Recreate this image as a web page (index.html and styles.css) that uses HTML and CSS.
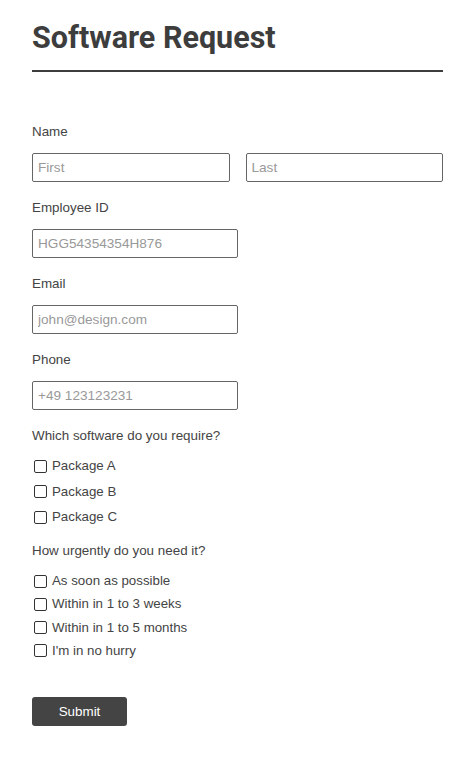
FILE: index.html
```html
<!DOCTYPE html>
<html lang="en">
<head>
<meta charset="utf-8">
<title>Software Request</title>
<link rel="stylesheet" href="styles.css">
</head>
<body>
<form class="page">
  <h1 class="title">Software Request</h1>
  <div class="rule"></div>

  <div class="field first-field">
    <label class="label">Name</label>
    <div class="name-row">
      <input class="input" type="text" placeholder="First">
      <input class="input" type="text" placeholder="Last">
    </div>
  </div>

  <div class="field">
    <label class="label">Employee ID</label>
    <input class="input short" type="text" placeholder="HGG54354354H876">
  </div>

  <div class="field">
    <label class="label">Email</label>
    <input class="input short" type="text" placeholder="john@design.com">
  </div>

  <div class="field">
    <label class="label">Phone</label>
    <input class="input short" type="text" placeholder="+49 123123231">
  </div>

  <div class="field">
    <div class="label">Which software do you require?</div>
    <div class="options options-wide">
      <label class="option"><input class="check" type="checkbox">Package A</label>
      <label class="option"><input class="check" type="checkbox">Package B</label>
      <label class="option"><input class="check" type="checkbox">Package C</label>
    </div>
  </div>

  <div class="field">
    <div class="label">How urgently do you need it?</div>
    <div class="options options-tight">
      <label class="option"><input class="check" type="checkbox">As soon as possible</label>
      <label class="option"><input class="check" type="checkbox">Within in 1 to 3 weeks</label>
      <label class="option"><input class="check" type="checkbox">Within in 1 to 5 months</label>
      <label class="option"><input class="check" type="checkbox">I'm in no hurry</label>
    </div>
  </div>

  <button class="submit" type="button">Submit</button>
</form>
</body>
</html>
```

FILE: styles.css
```css
html, body {
  margin: 0;
  padding: 0;
  background: #ffffff;
}

.page {
  display: flex;
  flex-direction: column;
  padding: 20px 31px 0 32px;
  font-family: "Liberation Sans", Arial, sans-serif;
  font-size: 13.4px;
  color: #444444;
}

.title {
  margin: 0;
  font-family: Roboto, "Liberation Sans", sans-serif;
  font-weight: 700;
  font-size: 30.5px;
  line-height: 35px;
  color: #3d3d3d;
}

.rule {
  margin-top: 15px;
  height: 2px;
  background: #3d3d3d;
}

.field {
  display: flex;
  flex-direction: column;
  margin-top: 18px;
}

.first-field {
  margin-top: 52px;
}

.label {
  display: block;
  line-height: 16px;
  margin-bottom: 13px;
  padding-top: 1px;
  margin-top: -1px;
}

.name-row {
  display: grid;
  grid-template-columns: 1fr 1fr;
  column-gap: 16px;
}

.input {
  box-sizing: border-box;
  height: 29px;
  margin: 0;
  padding: 0 5px;
  border: 1px solid #666666;
  border-radius: 2px;
  font-family: "Liberation Sans", Arial, sans-serif;
  font-size: 13.6px;
  color: #444444;
  background: #ffffff;
  outline: none;
}

.input::placeholder {
  color: #999999;
}

.short {
  width: 206px;
}

.options {
  display: flex;
  flex-direction: column;
  margin-top: 1px;
  font-size: 13.3px;
}

.options-wide {
  gap: 9.5px;
}

.options-tight {
  gap: 7.3px;
}

.option {
  display: flex;
  align-items: center;
  line-height: 16px;
  padding-left: 2px;
}

.check {
  appearance: none;
  -webkit-appearance: none;
  box-sizing: border-box;
  width: 13px;
  height: 13px;
  margin: 0 5px 0 0;
  border: 1.5px solid #333333;
  border-radius: 2px;
  background: #ffffff;
}

.submit {
  align-self: flex-start;
  margin-top: 38px;
  width: 95px;
  height: 29px;
  border: none;
  border-radius: 3px;
  background: #444444;
  color: #ffffff;
  font-family: "Liberation Sans", Arial, sans-serif;
  font-size: 13.4px;
  padding: 0;
}
```
